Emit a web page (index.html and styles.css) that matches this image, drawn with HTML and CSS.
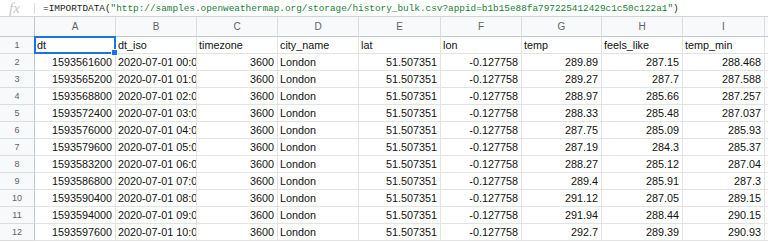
FILE: index.html
```html
<!DOCTYPE html>
<html>
<head>
<meta charset="utf-8">
<link rel="stylesheet" href="styles.css">
</head>
<body>
<div class="fbar">
  <span class="fx">fx</span>
  <span class="sep"></span>
  <span class="formula">=IMPORTDATA(<span class="str">"http://samples.openweathermap.org/storage/history_bulk.csv?appid=b1b15e88fa797225412429c1c50c122a1"</span>)</span>
</div>
<div class="sheet">
  <div class="ch corner"></div>
  <div class="ch">A</div><div class="ch">B</div><div class="ch">C</div><div class="ch">D</div><div class="ch">E</div><div class="ch">F</div><div class="ch">G</div><div class="ch">H</div><div class="ch">I</div><div class="ch last"></div>

  <div class="rh">1</div>
  <div class="c sel">dt</div><div class="c">dt_iso</div><div class="c">timezone</div><div class="c">city_name</div><div class="c">lat</div><div class="c">lon</div><div class="c">temp</div><div class="c">feels_like</div><div class="c">temp_min</div><div class="c"></div>

  <div class="rh">2</div>
  <div class="c n">1593561600</div><div class="c">2020-07-01 00:00:00 +0000 UTC</div><div class="c n">3600</div><div class="c">London</div><div class="c n">51.507351</div><div class="c n">-0.127758</div><div class="c n">289.89</div><div class="c n">287.15</div><div class="c n">288.468</div><div class="c"></div>

  <div class="rh">3</div>
  <div class="c n">1593565200</div><div class="c">2020-07-01 01:00:00 +0000 UTC</div><div class="c n">3600</div><div class="c">London</div><div class="c n">51.507351</div><div class="c n">-0.127758</div><div class="c n">289.27</div><div class="c n">287.7</div><div class="c n">287.588</div><div class="c"></div>

  <div class="rh">4</div>
  <div class="c n">1593568800</div><div class="c">2020-07-01 02:00:00 +0000 UTC</div><div class="c n">3600</div><div class="c">London</div><div class="c n">51.507351</div><div class="c n">-0.127758</div><div class="c n">288.97</div><div class="c n">285.66</div><div class="c n">287.257</div><div class="c"></div>

  <div class="rh">5</div>
  <div class="c n">1593572400</div><div class="c">2020-07-01 03:00:00 +0000 UTC</div><div class="c n">3600</div><div class="c">London</div><div class="c n">51.507351</div><div class="c n">-0.127758</div><div class="c n">288.33</div><div class="c n">285.48</div><div class="c n">287.037</div><div class="c"></div>

  <div class="rh">6</div>
  <div class="c n">1593576000</div><div class="c">2020-07-01 04:00:00 +0000 UTC</div><div class="c n">3600</div><div class="c">London</div><div class="c n">51.507351</div><div class="c n">-0.127758</div><div class="c n">287.75</div><div class="c n">285.09</div><div class="c n">285.93</div><div class="c"></div>

  <div class="rh">7</div>
  <div class="c n">1593579600</div><div class="c">2020-07-01 05:00:00 +0000 UTC</div><div class="c n">3600</div><div class="c">London</div><div class="c n">51.507351</div><div class="c n">-0.127758</div><div class="c n">287.19</div><div class="c n">284.3</div><div class="c n">285.37</div><div class="c"></div>

  <div class="rh">8</div>
  <div class="c n">1593583200</div><div class="c">2020-07-01 06:00:00 +0000 UTC</div><div class="c n">3600</div><div class="c">London</div><div class="c n">51.507351</div><div class="c n">-0.127758</div><div class="c n">288.27</div><div class="c n">285.12</div><div class="c n">287.04</div><div class="c"></div>

  <div class="rh">9</div>
  <div class="c n">1593586800</div><div class="c">2020-07-01 07:00:00 +0000 UTC</div><div class="c n">3600</div><div class="c">London</div><div class="c n">51.507351</div><div class="c n">-0.127758</div><div class="c n">289.4</div><div class="c n">285.91</div><div class="c n">287.3</div><div class="c"></div>

  <div class="rh">10</div>
  <div class="c n">1593590400</div><div class="c">2020-07-01 08:00:00 +0000 UTC</div><div class="c n">3600</div><div class="c">London</div><div class="c n">51.507351</div><div class="c n">-0.127758</div><div class="c n">291.12</div><div class="c n">287.05</div><div class="c n">289.15</div><div class="c"></div>

  <div class="rh">11</div>
  <div class="c n">1593594000</div><div class="c">2020-07-01 09:00:00 +0000 UTC</div><div class="c n">3600</div><div class="c">London</div><div class="c n">51.507351</div><div class="c n">-0.127758</div><div class="c n">291.94</div><div class="c n">288.44</div><div class="c n">290.15</div><div class="c"></div>

  <div class="rh">12</div>
  <div class="c n">1593597600</div><div class="c">2020-07-01 10:00:00 +0000 UTC</div><div class="c n">3600</div><div class="c">London</div><div class="c n">51.507351</div><div class="c n">-0.127758</div><div class="c n">292.7</div><div class="c n">289.39</div><div class="c n">290.93</div><div class="c"></div>
</div>
</body>
</html>
```

FILE: styles.css
```css
html, body {
  margin: 0;
  padding: 0;
  background: #ffffff;
  overflow: hidden;
}
body {
  width: 768px;
  height: 242px;
  font-family: "Liberation Sans", Arial, sans-serif;
}
.fbar {
  height: 17px;
  box-sizing: border-box;
  border-bottom: 1px solid #d3d3d3;
  display: flex;
  align-items: center;
  white-space: nowrap;
  overflow: hidden;
}
.fx {
  width: 34px;
  box-sizing: border-box;
  padding-left: 9px;
  font-family: "Liberation Serif", "Times New Roman", serif;
  font-style: italic;
  font-size: 15px;
  color: #c4c7c9;
  line-height: 17px;
}
.sep {
  width: 1px;
  height: 11px;
  background: #dadce0;
  margin-right: 8px;
}
.formula {
  font-family: "Liberation Mono", "Courier New", monospace;
  font-size: 9.4px;
  color: #202124;
}
.str {
  color: #188038;
}
.sheet {
  display: grid;
  grid-template-columns: 35px 81px 81px 81px 81px 82px 81px 80px 81px 82px 1fr;
  grid-template-rows: 20px;
  grid-auto-rows: 17px;
}
.ch {
  background: #f8f9fa;
  box-sizing: border-box;
  border-right: 1px solid #dadcdf;
  border-bottom: 1px solid #c4c7c9;
  color: #5f6368;
  font-size: 10px;
  display: flex;
  align-items: center;
  justify-content: center;
}
.ch.corner {
  border-right: 1px solid #c4c7c9;
}
.ch.last {
  border-right: none;
}
.rh {
  background: #f8f9fa;
  box-sizing: border-box;
  border-right: 1px solid #c4c7c9;
  border-bottom: 1px solid #dadcdf;
  color: #5f6368;
  font-size: 9px;
  display: flex;
  align-items: center;
  justify-content: center;
}
.c {
  box-sizing: border-box;
  border-right: 1px solid #e2e3e3;
  border-bottom: 1px solid #e2e3e3;
  font-size: 10.8px;
  color: #111111;
  line-height: 16px;
  padding: 0 3px 0 2px;
  white-space: nowrap;
  overflow: hidden;
}
.c.n {
  text-align: right;
}
.sel {
  position: relative;
  overflow: visible;
}
.sel::before {
  content: "";
  position: absolute;
  left: -1px;
  top: -1px;
  right: -1px;
  bottom: -1px;
  border: 2px solid #1a73e8;
  pointer-events: none;
}
.sel::after {
  content: "";
  position: absolute;
  right: -3px;
  bottom: -3px;
  width: 5px;
  height: 5px;
  background: #1a73e8;
  border: 1px solid #ffffff;
  z-index: 2;
}
```
